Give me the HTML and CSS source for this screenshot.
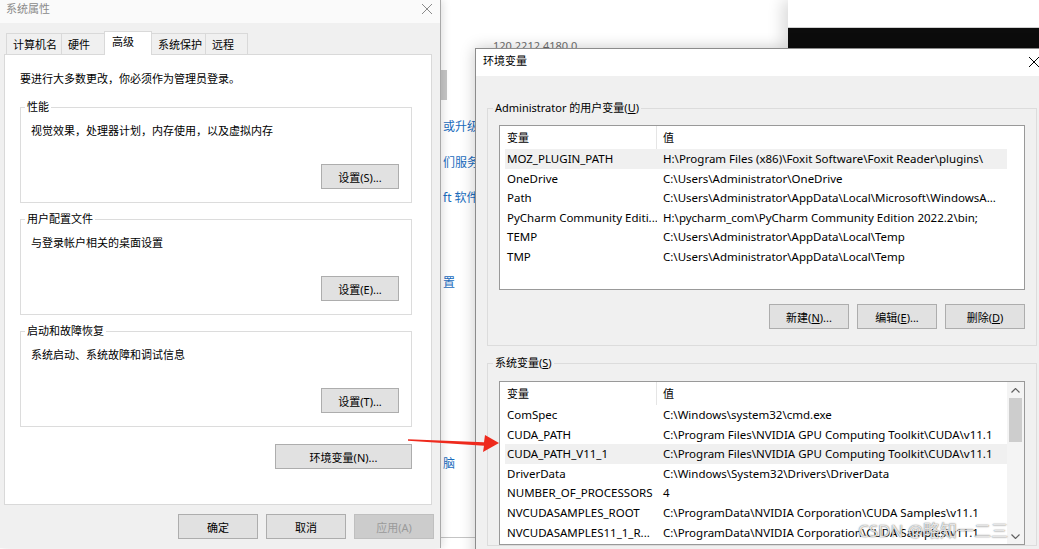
FILE: index.html
```html
<!DOCTYPE html>
<html lang="zh-CN">
<head>
    <meta charset="UTF-8">
    <title>系统属性 - 环境变量</title>
    <link rel="stylesheet" href="styles.css">
</head>
<body>
<div class="desktop">

    <!-- window behind, partly covered -->
    <div class="win back-win">
        <div class="back-ver">120.2212.4180.0</div>
        <div class="back-thumb"></div>
        <p class="lnk lnk1">或升级</p>
        <p class="lnk lnk2">们服务</p>
        <p class="lnk lnk3">ft 软件</p>
        <p class="lnk lnk4">置</p>
        <p class="lnk lnk5">脑</p>
    </div>

    <div class="win term-win">
        <div class="term-top"></div>
        <div class="term-bar"></div>
    </div>

    <!-- 系统属性 -->
    <div class="win sys-win">
        <div class="sys-title">
            <span class="title-txt">系统属性</span>
            <svg class="close close-dim" width="10" height="10" viewBox="0 0 10 10"><path d="M0 0L10 10M10 0L0 10"/></svg>
        </div>
        <div class="tabs">
            <span class="tab t1">计算机名</span>
            <span class="tab t2">硬件</span>
            <span class="tab t3 active">高级</span>
            <span class="tab t4">系统保护</span>
            <span class="tab t5">远程</span>
        </div>
        <div class="tab-panel">
            <p class="note">要进行大多数更改，你必须作为管理员登录。</p>
            <fieldset class="group group-first">
                <legend>性能</legend>
                <p class="desc">视觉效果，处理器计划，内存使用，以及虚拟内存</p>
                <div class="btn-row"><button class="btn">设置(S)...</button></div>
            </fieldset>
            <fieldset class="group">
                <legend>用户配置文件</legend>
                <p class="desc">与登录帐户相关的桌面设置</p>
                <div class="btn-row"><button class="btn">设置(E)...</button></div>
            </fieldset>
            <fieldset class="group">
                <legend>启动和故障恢复</legend>
                <p class="desc">系统启动、系统故障和调试信息</p>
                <div class="btn-row"><button class="btn">设置(T)...</button></div>
            </fieldset>
            <div class="btn-row env-row"><button class="btn btn-wide">环境变量(N)...</button></div>
        </div>
        <div class="dlg-buttons">
            <button class="btn btn-dlg">确定</button>
            <button class="btn btn-dlg">取消</button>
            <button class="btn btn-dlg" disabled>应用(A)</button>
        </div>
    </div>

    <!-- 环境变量 -->
    <div class="win env-win">
        <div class="env-title">
            <span class="title-txt">环境变量</span>
            <svg class="close" width="10" height="10" viewBox="0 0 10 10"><path d="M0 0L10 10M10 0L0 10"/></svg>
        </div>
        <div class="env-body">
            <fieldset class="egroup">
                <legend>Administrator 的用户变量(<u>U</u>)</legend>
                <div class="list list-user">
                    <div class="list-body">
                        <div class="row head"><span class="c1">变量</span><span class="c2">值</span></div>
                        <div class="row sel"><span class="c1">MOZ_PLUGIN_PATH</span><span class="c2">H:\Program Files (x86)\Foxit Software\Foxit Reader\plugins\</span></div>
                        <div class="row"><span class="c1">OneDrive</span><span class="c2">C:\Users\Administrator\OneDrive</span></div>
                        <div class="row"><span class="c1">Path</span><span class="c2">C:\Users\Administrator\AppData\Local\Microsoft\WindowsA...</span></div>
                        <div class="row"><span class="c1">PyCharm Community Editi...</span><span class="c2">H:\pycharm_com\PyCharm Community Edition 2022.2\bin;</span></div>
                        <div class="row"><span class="c1">TEMP</span><span class="c2">C:\Users\Administrator\AppData\Local\Temp</span></div>
                        <div class="row"><span class="c1">TMP</span><span class="c2">C:\Users\Administrator\AppData\Local\Temp</span></div>
                    </div>
                    <div class="list-pad"></div>
                </div>
                <div class="btn-row ebtn-row">
                    <button class="btn btn-dlg">新建(<u>N</u>)...</button>
                    <button class="btn btn-dlg">编辑(<u>E</u>)...</button>
                    <button class="btn btn-dlg">删除(<u>D</u>)</button>
                </div>
            </fieldset>
            <fieldset class="egroup egroup-sys">
                <legend>系统变量(<u>S</u>)</legend>
                <div class="list list-sys">
                    <div class="list-body">
                        <div class="row head"><span class="c1">变量</span><span class="c2">值</span></div>
                        <div class="row"><span class="c1">ComSpec</span><span class="c2">C:\Windows\system32\cmd.exe</span></div>
                        <div class="row"><span class="c1">CUDA_PATH</span><span class="c2">C:\Program Files\NVIDIA GPU Computing Toolkit\CUDA\v11.1</span></div>
                        <div class="row sel"><span class="c1">CUDA_PATH_V11_1</span><span class="c2">C:\Program Files\NVIDIA GPU Computing Toolkit\CUDA\v11.1</span></div>
                        <div class="row"><span class="c1">DriverData</span><span class="c2">C:\Windows\System32\Drivers\DriverData</span></div>
                        <div class="row"><span class="c1">NUMBER_OF_PROCESSORS</span><span class="c2">4</span></div>
                        <div class="row"><span class="c1">NVCUDASAMPLES_ROOT</span><span class="c2">C:\ProgramData\NVIDIA Corporation\CUDA Samples\v11.1</span></div>
                        <div class="row"><span class="c1">NVCUDASAMPLES11_1_R...</span><span class="c2">C:\ProgramData\NVIDIA Corporation\CUDA Samples\v11.1</span></div>
                    </div>
                    <div class="vscroll">
                        <div class="sb-btn"><svg width="9" height="5" viewBox="0 0 9 5"><path d="M0.5 4.5L4.5 0.5L8.5 4.5"/></svg></div>
                        <div class="sb-thumb"></div>
                        <div class="sb-track"></div>
                        <div class="sb-btn"><svg width="9" height="5" viewBox="0 0 9 5"><path d="M0.5 0.5L4.5 4.5L8.5 0.5"/></svg></div>
                    </div>
                </div>
            </fieldset>
        </div>
    </div>

    <svg class="arrow" width="110" height="35" viewBox="0 0 110 35">
        <polygon points="8,14.2 84,17.2 85,10 99,18 83,27 84,20.8 8,15.8"/>
    </svg>

    <div class="watermark">CSDN @略知一二三</div>
</div>
</body>
</html>
```

FILE: styles.css
```css
* {
    box-sizing: border-box;
}
body {
    margin: 0;
    font-family: "Noto Sans", "Noto Sans CJK SC", sans-serif;
    font-size: 11px;
    color: #000;
}
p {
    margin: 0;
}
.desktop {
    position: relative;
    width: 1039px;
    height: 549px;
    overflow: hidden;
    background: #fff;
}
.win {
    position: absolute;
}

/* background windows */
.back-win {
    left: 441px;
    top: 0;
    width: 347px;
    height: 538px;
    background: #fff;
    border-bottom: 1px solid #c4c4c4;
    display: flex;
    flex-direction: column;
}
.back-ver {
    margin: 39px 0 0 52px;
    line-height: 14px;
    color: #6d6d6d;
}
.back-thumb {
    margin-top: 17px;
    width: 6px;
    height: 30px;
    background: #c6c6c6;
}
.lnk {
    padding-left: 2px;
    font-size: 12px;
    line-height: 16px;
    color: #1a6cbd;
}
.lnk1 { margin-top: 19px; }
.lnk2 { margin-top: 20px; }
.lnk3 { margin-top: 19px; }
.lnk4 { margin-top: 69px; }
.lnk5 { margin-top: 165px; }

.term-win {
    left: 788px;
    top: 0;
    width: 260px;
    height: 48px;
    box-shadow: -6px 0 14px rgba(0, 0, 0, 0.14);
}
.term-top {
    height: 28px;
    background: #fff;
    border-bottom: 1px solid #d0d0d0;
}
.term-bar {
    height: 20px;
    background: #0c0c0c;
}

/* 系统属性 */
.sys-win {
    left: 0;
    top: 0;
    width: 441px;
    height: 548px;
    background: #f0f0f0;
    border-right: 1px solid #a9a9a9;
    box-shadow: 2px 0 8px rgba(0, 0, 0, 0.12);
}
.sys-title {
    height: 23px;
    background: #fafafa;
    display: flex;
    justify-content: space-between;
    align-items: flex-start;
    padding: 2px 8px 0 6px;
}
.title-txt {
    line-height: 14px;
}
.sys-title .title-txt {
    color: #8a8a8a;
}
.close {
    margin-top: 2px;
    fill: none;
    stroke: #000;
    stroke-width: 1;
}
.close-dim {
    stroke: #8a8a8a;
}
.tabs {
    margin-top: 8px;
    height: 23px;
    padding-left: 6px;
    display: flex;
    align-items: flex-end;
    position: relative;
    z-index: 1;
}
.tab {
    height: 21px;
    line-height: 21px;
    padding-left: 6px;
    background: #f0f0f0;
    border: 1px solid #d9d9d9;
    border-bottom: none;
    margin-right: -1px;
}
.t1 { width: 56px; }
.t2 { width: 44px; }
.t3 { width: 48px; }
.t4 { width: 55px; }
.t5 { width: 43px; }
.tab.active {
    height: 24px;
    line-height: 20px;
    padding-left: 7px;
    background: #fff;
    margin-bottom: -1px;
    position: relative;
}
.tab-panel {
    margin: 0 8px 0 4px;
    height: 451px;
    background: #fff;
    border: 1px solid #d9d9d9;
    padding: 17px 19px 0 15px;
}
.note {
    line-height: 14px;
}
.group {
    margin: 9px 0 0;
    border: 1px solid #dcdcdc;
    padding: 0 12px 13px 10px;
    min-width: 0;
}
.group-first {
    margin-top: 14px;
}
legend {
    padding: 0 2px;
    margin-left: -6px;
    line-height: 14px;
}
.desc {
    margin-top: 10px;
    line-height: 14px;
}
.btn-row {
    display: flex;
    justify-content: flex-end;
    gap: 8px;
}
.group .btn-row {
    margin-top: 26px;
}
.env-row {
    margin-top: 17px;
}
.btn {
    width: 78px;
    height: 25px;
    padding: 0;
    font: inherit;
    color: #000;
    background: #e1e1e1;
    border: 1px solid #adadad;
}
.btn u {
    text-underline-offset: 1px;
}
.btn-wide {
    width: 137px;
}
.btn-dlg {
    width: 80px;
}
.btn:disabled {
    background: #cccccc;
    border-color: #bfbfbf;
    color: #9a9a9a;
}
.dlg-buttons {
    margin-top: 9px;
    padding-right: 6px;
    display: flex;
    justify-content: flex-end;
    gap: 8px;
}

/* 环境变量 */
.env-win {
    left: 475px;
    top: 48px;
    width: 574px;
    height: 520px;
    background: #f0f0f0;
    border: 1px solid #8c8c8c;
    box-shadow: 0 0 14px rgba(0, 0, 0, 0.22);
}
.env-title {
    height: 27px;
    background: #fff;
    display: flex;
    justify-content: space-between;
    align-items: flex-start;
    padding: 5px 9px 0 7px;
}
.env-title .close {
    margin-top: 3px;
}
.env-body {
    padding: 25px 11px 0;
}
.egroup {
    margin: 0;
    border: 1px solid #dcdcdc;
    padding: 0 11px 16px;
    min-width: 0;
}
.egroup-sys {
    margin-top: 10px;
    padding-bottom: 0;
}
.list {
    margin-top: 10px;
    height: 165px;
    background: #fff;
    border: 1px solid #999;
    display: flex;
}
.list-sys {
    margin-top: 11px;
    height: 164px;
}
.list-body {
    flex: 1;
    min-width: 0;
    padding-left: 5px;
    overflow: hidden;
    font-size: 11.5px;
}
.list-pad {
    width: 17px;
}
.row {
    display: grid;
    grid-template-columns: 152px 1fr;
    height: 19.6px;
    line-height: 19.6px;
    white-space: nowrap;
}
.row span {
    overflow: hidden;
}
.row.head {
    height: 23px;
    line-height: 23px;
    font-size: 11px;
}
.head .c1 {
    border-right: 1px solid #e5e5e5;
}
.c1 {
    padding-left: 2px;
}
.c2 {
    padding-left: 6px;
}
.row.sel {
    background: #f0f0f0;
}
.ebtn-row {
    margin-top: 14px;
}
.vscroll {
    width: 17px;
    display: flex;
    flex-direction: column;
    align-items: center;
    background: #f4f4f4;
}
.sb-btn {
    width: 17px;
    height: 16px;
    display: flex;
    align-items: center;
    justify-content: center;
}
.sb-btn svg {
    fill: none;
    stroke: #606060;
    stroke-width: 1.2;
}
.sb-thumb {
    width: 13px;
    height: 44px;
    background: #cdcdcd;
}
.sb-track {
    flex: 1;
}

.arrow {
    position: absolute;
    left: 400px;
    top: 425px;
}
.arrow polygon {
    fill: #ee2a1d;
}
.watermark {
    position: absolute;
    left: 858px;
    top: 520px;
    font-size: 17px;
    line-height: 22px;
    color: rgba(255, 255, 255, 0.82);
    text-shadow: 0 0 1px rgba(0, 0, 0, 0.55), 0 0 2px rgba(0, 0, 0, 0.25);
    white-space: nowrap;
}
```
